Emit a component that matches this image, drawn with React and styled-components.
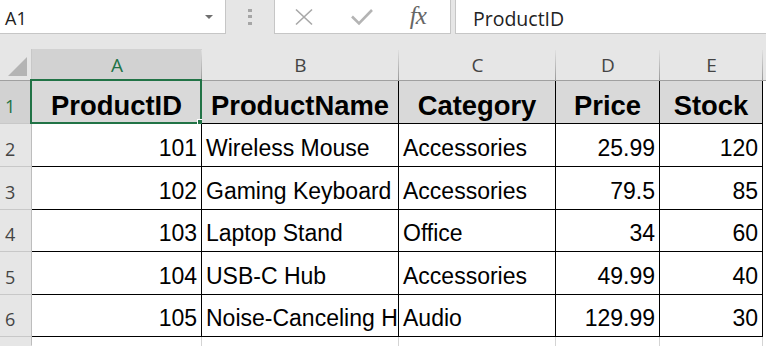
import React from 'react';
import styled, { createGlobalStyle } from 'styled-components';

const GlobalStyle = createGlobalStyle`
  html, body {
    margin: 0;
    padding: 0;
    background: #e6e6e6;
  }
  * {
    box-sizing: border-box;
  }
`;

const GREEN = '#217346';

const Window = styled.div`
  width: 766px;
  height: 346px;
  overflow: hidden;
  background: #e6e6e6;
  display: flex;
  flex-direction: column;
  gap: 15px;
`;

const Toolbar = styled.div`
  display: flex;
  height: 38px;
  font-family: 'Open Sans', 'Noto Sans', sans-serif;
`;

const NameBox = styled.div`
  width: 226px;
  background: #fff;
  border-right: 1px solid #c6c6c6;
  border-bottom: 1px solid #c6c6c6;
  display: flex;
  align-items: center;
  justify-content: space-between;
  padding: 3px 12px 0 5px;
  font-size: 18px;
  color: #222;
`;

const DropArrow = styled.span`
  width: 0;
  height: 0;
  border-left: 4px solid transparent;
  border-right: 4px solid transparent;
  border-top: 4px solid #6f6f6f;
  margin-top: -3px;
`;

const Grip = styled.div`
  width: 48px;
  display: flex;
  flex-direction: column;
  align-items: center;
  justify-content: center;
  gap: 3.5px;
  padding-bottom: 1px;
  span {
    width: 4px;
    height: 3px;
    background: #a6a6a6;
  }
`;

const ButtonGroup = styled.div`
  width: 177px;
  background: #fff;
  border: 1px solid #c6c6c6;
  border-top: none;
  display: flex;
  align-items: center;
`;

const IconButton = styled.div`
  flex: 1;
  display: flex;
  align-items: center;
  justify-content: center;
  height: 100%;
`;

const Fx = styled.span`
  font-family: 'Liberation Serif', serif;
  font-style: italic;
  font-size: 25px;
  color: #666;
  letter-spacing: -1px;
  margin: -2px 0 0 -6px;
`;

const FormulaInput = styled.div`
  flex: 1;
  margin-left: 4px;
  background: #fff;
  border-left: 1px solid #c6c6c6;
  border-bottom: 1px solid #c6c6c6;
  display: flex;
  align-items: center;
  padding: 3px 0 0 17px;
  font-size: 19.5px;
  color: #222;
`;

const Sheet = styled.div`
  flex: 1;
  display: grid;
  grid-template-columns: 32px 170px 197px 157px 104px 103px 1fr;
  grid-template-rows: 32px 43px 43px 43px 42px 43px 42px 1fr;
`;

const Corner = styled.div`
  position: relative;
  background: #e6e6e6;
  border-bottom: 1px solid #a0a0a0;
  border-right: 1px solid #c8c8c8;
  &::after {
    content: '';
    position: absolute;
    right: 4px;
    bottom: 4px;
    width: 0;
    height: 0;
    border-left: 19px solid transparent;
    border-bottom: 19px solid #b4b4b4;
  }
`;

const ColHeader = styled.div`
  position: relative;
  display: flex;
  align-items: flex-end;
  justify-content: center;
  padding-bottom: 5px;
  background: ${p => (p.$active ? '#d2d2d2' : '#e6e6e6')};
  border-bottom: 1px solid #a0a0a0;
  font-family: 'Open Sans', 'Noto Sans', sans-serif;
  font-size: 19px;
  line-height: 1;
  color: ${p => (p.$active ? GREEN : '#444')};
  &::after {
    content: '';
    position: absolute;
    right: 0;
    top: 1px;
    bottom: 0;
    width: 1px;
    background: linear-gradient(#e0e0e0, #9a9a9a);
  }
`;

const RowHeader = styled.div`
  display: flex;
  align-items: flex-end;
  padding: 0 0 8px 5px;
  background: ${p => (p.$active ? '#d2d2d2' : '#e6e6e6')};
  border-right: 1px solid #bdbdbd;
  border-bottom: 1px solid ${p => (p.$last ? 'transparent' : '#c8c8c8')};
  font-family: 'Open Sans', 'Noto Sans', sans-serif;
  font-size: 18px;
  line-height: 1;
  color: ${p => (p.$active ? GREEN : '#444')};
`;

const Cell = styled.div`
  position: relative;
  display: flex;
  align-items: flex-end;
  justify-content: ${p => (p.$align === 'right' ? 'flex-end' : p.$align === 'center' ? 'center' : 'flex-start')};
  padding: ${p => (p.$head ? '0 3px 4px' : '0 4px 6px 4px')};
  background: ${p => (p.$head ? '#d9d9d9' : '#fff')};
  border-right: 1px solid #000;
  border-bottom: 1px solid #000;
  font-family: 'Liberation Sans', Arial, sans-serif;
  font-size: ${p => (p.$head ? '27.4px' : '23px')};
  font-weight: ${p => (p.$head ? 700 : 400)};
  line-height: 1;
  color: #000;
  white-space: nowrap;
  overflow: ${p => (p.$selected ? 'visible' : 'hidden')};
`;

const BlankCell = styled.div`
  background: #fff;
  border-right: 1px solid #d4d4d4;
`;

const EdgeCell = styled.div`
  background: ${p => (p.$header ? '#e6e6e6' : '#fff')};
  border-bottom: ${p => (p.$header ? '1px solid #a0a0a0' : 'none')};
`;

const Selection = styled.div`
  position: absolute;
  left: -2px;
  top: -2px;
  right: -1px;
  bottom: -1px;
  border: 2px solid ${GREEN};
  pointer-events: none;
`;

const Handle = styled.div`
  position: absolute;
  right: -5px;
  bottom: -5px;
  width: 8px;
  height: 8px;
  background: ${GREEN};
  border: 1px solid #fff;
`;

const columns = ['A', 'B', 'C', 'D', 'E'];
const headers = ['ProductID', 'ProductName', 'Category', 'Price', 'Stock'];
const aligns = ['right', 'left', 'left', 'right', 'right'];

const rows = [
  ['101', 'Wireless Mouse', 'Accessories', '25.99', '120'],
  ['102', 'Gaming Keyboard', 'Accessories', '79.5', '85'],
  ['103', 'Laptop Stand', 'Office', '34', '60'],
  ['104', 'USB-C Hub', 'Accessories', '49.99', '40'],
  ['105', 'Noise-Canceling Headphones', 'Audio', '129.99', '30'],
];

const CloseIcon = () => (
  <svg width="20" height="18" viewBox="0 0 20 18">
    <path d="M2 1.5 L18 16.5 M18 1.5 L2 16.5" stroke="#a8a8a8" strokeWidth="1.6" fill="none" />
  </svg>
);

const CheckIcon = () => (
  <svg width="24" height="18" viewBox="0 0 24 18">
    <path d="M2 8.5 L9 15.5 L22 2" stroke="#b4b4b4" strokeWidth="2.6" fill="none" />
  </svg>
);

const App = () => {
  return (
    <>
      <GlobalStyle />
      <Window>
        <Toolbar>
          <NameBox>
            <span>A1</span>
            <DropArrow />
          </NameBox>
          <Grip>
            <span />
            <span />
            <span />
          </Grip>
          <ButtonGroup>
            <IconButton>
              <CloseIcon />
            </IconButton>
            <IconButton>
              <CheckIcon />
            </IconButton>
            <IconButton>
              <Fx>fx</Fx>
            </IconButton>
          </ButtonGroup>
          <FormulaInput>ProductID</FormulaInput>
        </Toolbar>

        <Sheet>
          <Corner />
          {columns.map((c, i) => (
            <ColHeader key={c} $active={i === 0}>{c}</ColHeader>
          ))}
          <EdgeCell $header />

          <RowHeader $active>1</RowHeader>
          {headers.map((h, i) => (
            <Cell key={h} $head $align="center" $selected={i === 0}>
              {h}
              {i === 0 && (
                <Selection>
                  <Handle />
                </Selection>
              )}
            </Cell>
          ))}
          <EdgeCell />

          {rows.map((row, r) => (
            <React.Fragment key={r}>
              <RowHeader>{r + 2}</RowHeader>
              {row.map((v, i) => (
                <Cell key={i} $align={aligns[i]}>{v}</Cell>
              ))}
              <EdgeCell />
            </React.Fragment>
          ))}

          <RowHeader $last />
          {columns.map(c => (
            <BlankCell key={c} />
          ))}
          <EdgeCell />
        </Sheet>
      </Window>
    </>
  );
};

export default App;
